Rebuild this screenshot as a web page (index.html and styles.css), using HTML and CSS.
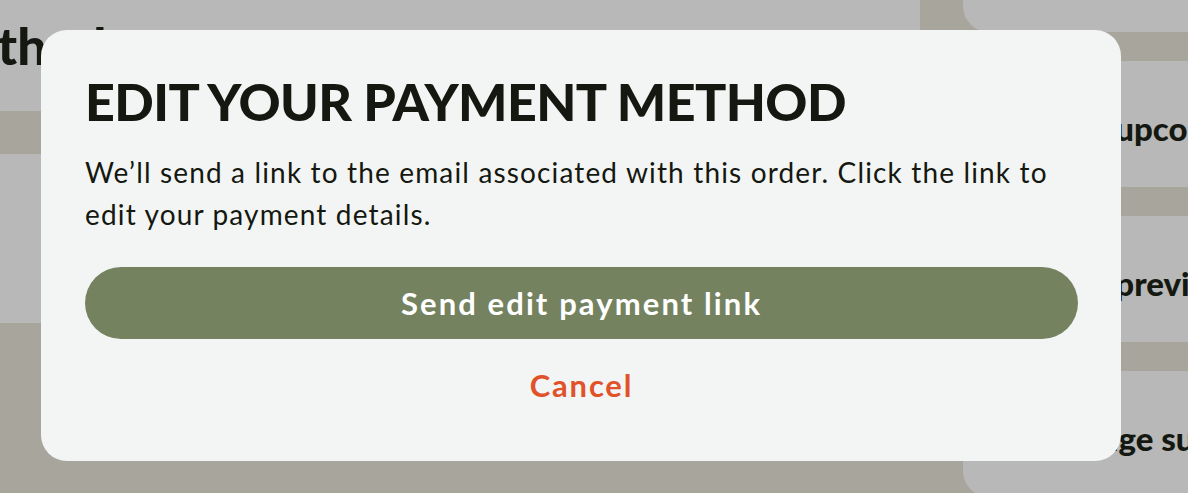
FILE: index.html
```html
<!DOCTYPE html>
<html lang="en">
<head>
<meta charset="utf-8">
<title>Edit your payment method</title>
<link rel="stylesheet" href="styles.css">
</head>
<body>
<div class="page">
  <div class="left-col">
    <section class="lcard lcard-top">
      <h2 class="ltitle">Payment methods</h2>
    </section>
    <section class="lcard lcard-mid"></section>
  </div>
  <div class="right-col">
    <section class="rcard rcard-first"></section>
    <section class="rcard"><h3 class="rtitle">Your upcoming orders</h3></section>
    <section class="rcard"><h3 class="rtitle">Your previous orders</h3></section>
    <section class="rcard rcard-manage"><h3 class="rtitle">Manage subscriptions</h3></section>
  </div>
</div>

<div class="overlay">
  <div class="modal" role="dialog" aria-labelledby="modal-title">
    <h1 class="modal-title" id="modal-title">EDIT YOUR PAYMENT METHOD</h1>
    <p class="modal-text">We’ll send a link to the email associated with this order. Click the link to<br>edit your payment details.</p>
    <button class="btn-primary" type="button">Send edit payment link</button>
    <button class="btn-cancel" type="button">Cancel</button>
  </div>
</div>
</body>
</html>
```

FILE: styles.css
```css
* { box-sizing: border-box; }

html, body {
  margin: 0;
  padding: 0;
  width: 1188px;
  height: 493px;
  overflow: hidden;
}

body {
  background: #a8a59c;
  font-family: "Lato", "Noto Sans", sans-serif;
  color: #141810;
}

.page {
  display: flex;
  gap: 43px;
  height: 493px;
}

.left-col {
  width: 920px;
  flex: none;
  display: flex;
  flex-direction: column;
  gap: 43px;
}

.lcard {
  background: #b7b8b7;
}

.lcard-top {
  height: 111px;
  padding-top: 18px;
}

.lcard-mid {
  height: 169px;
}

.ltitle {
  margin: 0 0 0 -292px;
  font-size: 52px;
  font-weight: 900;
  line-height: 54px;
  white-space: nowrap;
}

.right-col {
  flex: 1;
  display: flex;
  flex-direction: column;
  gap: 29px;
  margin-top: -94px;
}

.rcard {
  background: #b7b8b7;
  border-radius: 26px;
  height: 126px;
  flex: none;
  display: flex;
  align-items: center;
  padding-left: 77px;
  overflow: hidden;
}

.rcard-manage {
  padding-left: 72px;
}

.rtitle {
  margin: 0;
  font-size: 33px;
  font-weight: 900;
  white-space: nowrap;
  padding-top: 8px;
}

.overlay {
  position: fixed;
  inset: 0;
  padding: 30px 0 0 41px;
}

.modal {
  width: 1080px;
  height: 431px;
  background: #f3f5f4;
  border-radius: 26px;
  padding: 44px 43px 0 44px;
  display: flex;
  flex-direction: column;
}

.modal-title {
  margin: 0;
  font-size: 52px;
  line-height: 54px;
  font-weight: 900;
  color: #141810;
  letter-spacing: -0.6px;
  white-space: nowrap;
}

.modal-text {
  margin: 23px 0 0;
  font-size: 28px;
  line-height: 42px;
  font-weight: 400;
  color: #141810;
  letter-spacing: 1.15px;
  white-space: nowrap;
}

.btn-primary {
  margin-top: 32px;
  height: 72px;
  border: 0;
  border-radius: 36px;
  background: #75825f;
  color: #ffffff;
  font-family: inherit;
  font-size: 31px;
  font-weight: 700;
  letter-spacing: 2.1px;
  display: flex;
  align-items: center;
  justify-content: center;
  padding: 0;
}

.btn-cancel {
  margin-top: 31px;
  border: 0;
  background: none;
  color: #e0532a;
  font-family: inherit;
  font-size: 31px;
  line-height: 31px;
  font-weight: 700;
  letter-spacing: 1.8px;
  padding: 0;
  align-self: center;
}
```
